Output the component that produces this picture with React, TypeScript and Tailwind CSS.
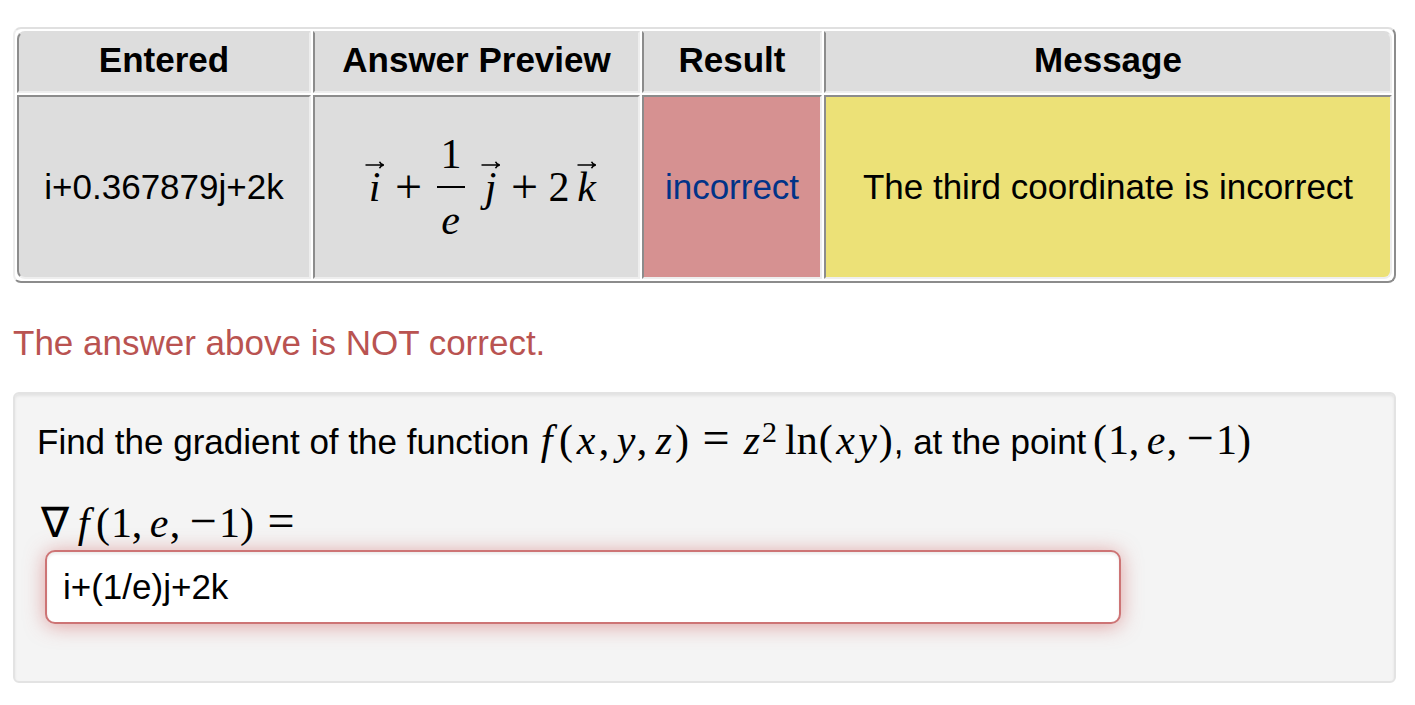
import { useState } from "react"
import type { ReactNode } from "react"

/** Advance width of every symbol used in the formulas. */
const SYMBOL_WIDTHS: Record<string, string> = {
  f: "w-[23px]",
  x: "w-6",
  y: "w-5",
  z: "w-5",
  e: "w-5",
  i: "w-5",
  j: "w-5",
  k: "w-5",
  "(": "w-4",
  ")": "w-4",
  "1": "w-5",
  "2": "w-5",
  ",": "w-3 mr-1.5",
  "=": "w-8 mx-2.5 text-5xl leading-none",
  "+": "w-8 mx-2 text-5xl leading-none",
  "−": "w-8 text-5xl leading-none",
  "∇": "w-[35px]",
}

const CELL =
  "border-2 border-t-[#8c8c8c] border-l-[#8c8c8c] border-r-[#eee] border-b-[#eee] p-0 text-center"

const HEAD_CELL =
  "border-2 border-t-[#ddd] border-l-[#8c8c8c] border-r-[#eee] border-b-[#eee] bg-[#ddd] p-0 pb-1 text-center font-bold"

function Sym({ children }: { children: string }) {
  const italic = /[a-z]/.test(children) ? "italic" : ""
  return (
    <span
      className={`inline-block text-center whitespace-nowrap ${italic} ${SYMBOL_WIDTHS[children]}`}
    >
      {children}
    </span>
  )
}

/** Splits a plain string into evenly set math symbols. */
function Symbols({ text }: { text: string }) {
  return (
    <>
      {[...text].map((char, idx) => (
        <Sym key={idx}>{char}</Sym>
      ))}
    </>
  )
}

function MathText({
  className = "",
  children,
}: {
  className?: string
  children: ReactNode
}) {
  return (
    <span
      className={`font-['Liberation_Serif',serif] text-[42px] whitespace-nowrap ${className}`}
    >
      {children}
    </span>
  )
}

function Vector({ name }: { name: string }) {
  return (
    <span className="relative inline-block">
      <svg
        viewBox="0 0 20 8"
        className="absolute -top-0.5 left-0 h-2 w-5"
        fill="none"
        stroke="currentColor"
        strokeWidth="1.6"
        aria-hidden="true"
      >
        <path d="M0.5 4H18.5M14.5 0.8C15.2 2.5 16.5 3.6 18.8 4C16.5 4.4 15.2 5.5 14.5 7.2" />
      </svg>
      <Sym>{name}</Sym>
    </span>
  )
}

function Fraction({ top, bottom }: { top: string; bottom: string }) {
  return (
    <span className="mr-4 ml-1 inline-flex w-7 flex-col items-center">
      <span className="flex h-16 items-center">
        <Sym>{top}</Sym>
      </span>
      <span className="h-0.5 w-full bg-black" />
      <span className="flex h-16 items-center">
        <Sym>{bottom}</Sym>
      </span>
    </span>
  )
}

function ResultsTable() {
  return (
    <table className="w-full table-fixed border-separate border-spacing-0.5 rounded-lg border-2 border-t-[#e0e0e0] border-r-[#8c8c8c] border-b-[#8c8c8c] border-l-[#eee]">
      <colgroup>
        <col className="w-[294px]" />
        <col className="w-[327px]" />
        <col className="w-[180px]" />
        <col />
      </colgroup>
      <thead>
        <tr className="h-[62px]">
          <th className={`${HEAD_CELL} rounded-tl-lg`}>Entered</th>
          <th className={HEAD_CELL}>Answer Preview</th>
          <th className={HEAD_CELL}>Result</th>
          <th className={`${HEAD_CELL} rounded-tr-lg`}>Message</th>
        </tr>
      </thead>
      <tbody>
        <tr className="h-[184px]">
          <td className={`${CELL} rounded-bl-lg bg-[#ddd]`}>i+0.367879j+2k</td>
          <td className={`${CELL} bg-[#ddd]`}>
            <MathText>
              <span className="flex items-center justify-center pl-2 leading-12">
                <Vector name="i" />
                <Sym>+</Sym>
                <Fraction top="1" bottom="e" />
                <Vector name="j" />
                <Sym>+</Sym>
                <Sym>2</Sym>
                <span className="ml-2">
                  <Vector name="k" />
                </span>
              </span>
            </MathText>
          </td>
          <td className={`${CELL} bg-[#d69191]`}>
            <a href="#answer" className="text-[#003388]">
              incorrect
            </a>
          </td>
          <td className={`${CELL} rounded-br-lg bg-[#ece177]`}>
            The third coordinate is incorrect
          </td>
        </tr>
      </tbody>
    </table>
  )
}

function Problem() {
  const [answer, setAnswer] = useState("i+(1/e)j+2k")
  return (
    <section className="mt-6 rounded-md border-2 border-[#e3e3e3] bg-[#f4f4f4] px-[22px] pt-5 pb-[57px] shadow-[inset_0_2px_3px_rgba(0,0,0,0.07)]">
      <p>
        Find the gradient of the function{" "}
        <MathText className="-ml-1">
          <Symbols text="f(x,y,z)=z" />
          <sup className="relative -top-3 align-baseline text-3xl leading-none">2</sup>
          <span className="ml-2">ln</span>
          <Symbols text="(xy)" />
        </MathText>
        , at the point{" "}
        <MathText className="-ml-1">
          <Symbols text="(1,e,−1)" />
        </MathText>
      </p>
      <label htmlFor="answer" className="mt-[30px] block">
        <MathText>
          <Symbols text="∇f(1,e,−1)=" />
        </MathText>
      </label>
      <input
        id="answer"
        type="text"
        value={answer}
        onChange={(event) => setAnswer(event.target.value)}
        className="ml-2 block h-[74px] w-full max-w-[1076px] rounded-[10px] border-2 border-[#cd7475] bg-white px-4 shadow-[inset_0_2px_3px_rgba(0,0,0,0.08),0_2px_20px_rgba(205,80,80,0.5)] outline-none"
      />
    </section>
  )
}

export default function App() {
  return (
    <main className="bg-white pt-[27px] pr-[19px] pb-[22px] pl-[13px] font-['Liberation_Sans',Arial,sans-serif] text-[35px] leading-[50px] text-black">
      <ResultsTable />
      <p className="mt-[35px] text-[#b95351]">The answer above is NOT correct.</p>
      <Problem />
    </main>
  )
}
